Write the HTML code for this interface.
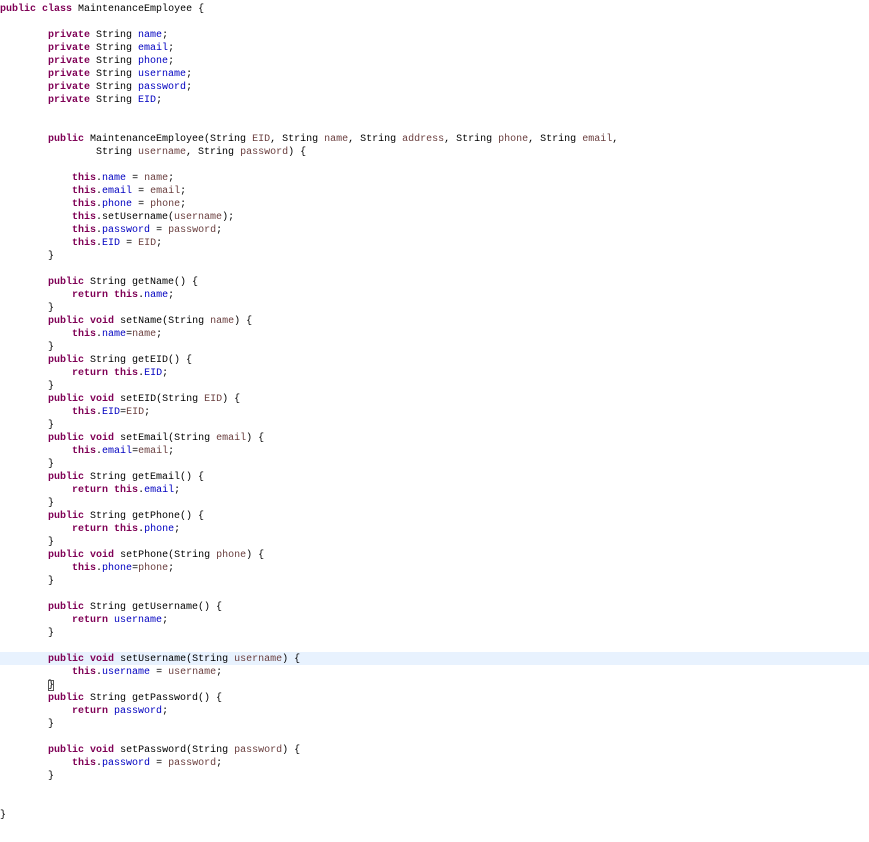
<!DOCTYPE html>
<html><head><style>
html,body{margin:0;padding:0;background:#fff;width:869px;height:842px;overflow:hidden}
pre{margin:0;position:absolute;left:0;top:3px;font-family:"Liberation Mono",monospace;font-size:10px;line-height:13px;color:#000;tab-size:8}
.k{color:#7f0055;font-weight:bold}
.f{color:#0000c0}
.p{color:#6a3e3e}
.hl{position:absolute;left:0;top:652px;width:869px;height:13px;background:#e8f2fe}
.b{outline:1px solid #555;outline-offset:-1px}
</style></head><body>
<div class="hl"></div>
<pre><span class="k">public</span> <span class="k">class</span> MaintenanceEmployee {

        <span class="k">private</span> String <span class="f">name</span>;
        <span class="k">private</span> String <span class="f">email</span>;
        <span class="k">private</span> String <span class="f">phone</span>;
        <span class="k">private</span> String <span class="f">username</span>;
        <span class="k">private</span> String <span class="f">password</span>;
        <span class="k">private</span> String <span class="f">EID</span>;


        <span class="k">public</span> MaintenanceEmployee(String <span class="p">EID</span>, String <span class="p">name</span>, String <span class="p">address</span>, String <span class="p">phone</span>, String <span class="p">email</span>,
                String <span class="p">username</span>, String <span class="p">password</span>) {

            <span class="k">this</span>.<span class="f">name</span> = <span class="p">name</span>;
            <span class="k">this</span>.<span class="f">email</span> = <span class="p">email</span>;
            <span class="k">this</span>.<span class="f">phone</span> = <span class="p">phone</span>;
            <span class="k">this</span>.setUsername(<span class="p">username</span>);
            <span class="k">this</span>.<span class="f">password</span> = <span class="p">password</span>;
            <span class="k">this</span>.<span class="f">EID</span> = <span class="p">EID</span>;
        }

        <span class="k">public</span> String getName() {
            <span class="k">return</span> <span class="k">this</span>.<span class="f">name</span>;
        }
        <span class="k">public</span> <span class="k">void</span> setName(String <span class="p">name</span>) {
            <span class="k">this</span>.<span class="f">name</span>=<span class="p">name</span>;
        }
        <span class="k">public</span> String getEID() {
            <span class="k">return</span> <span class="k">this</span>.<span class="f">EID</span>;
        }
        <span class="k">public</span> <span class="k">void</span> setEID(String <span class="p">EID</span>) {
            <span class="k">this</span>.<span class="f">EID</span>=<span class="p">EID</span>;
        }
        <span class="k">public</span> <span class="k">void</span> setEmail(String <span class="p">email</span>) {
            <span class="k">this</span>.<span class="f">email</span>=<span class="p">email</span>;
        }
        <span class="k">public</span> String getEmail() {
            <span class="k">return</span> <span class="k">this</span>.<span class="f">email</span>;
        }
        <span class="k">public</span> String getPhone() {
            <span class="k">return</span> <span class="k">this</span>.<span class="f">phone</span>;
        }
        <span class="k">public</span> <span class="k">void</span> setPhone(String <span class="p">phone</span>) {
            <span class="k">this</span>.<span class="f">phone</span>=<span class="p">phone</span>;
        }

        <span class="k">public</span> String getUsername() {
            <span class="k">return</span> <span class="f">username</span>;
        }

        <span class="k">public</span> <span class="k">void</span> setUsername(String <span class="p">username</span>) {
            <span class="k">this</span>.<span class="f">username</span> = <span class="p">username</span>;
        <span class="b">}</span>
        <span class="k">public</span> String getPassword() {
            <span class="k">return</span> <span class="f">password</span>;
        }

        <span class="k">public</span> <span class="k">void</span> setPassword(String <span class="p">password</span>) {
            <span class="k">this</span>.<span class="f">password</span> = <span class="p">password</span>;
        }


}
</pre>
</body></html>
